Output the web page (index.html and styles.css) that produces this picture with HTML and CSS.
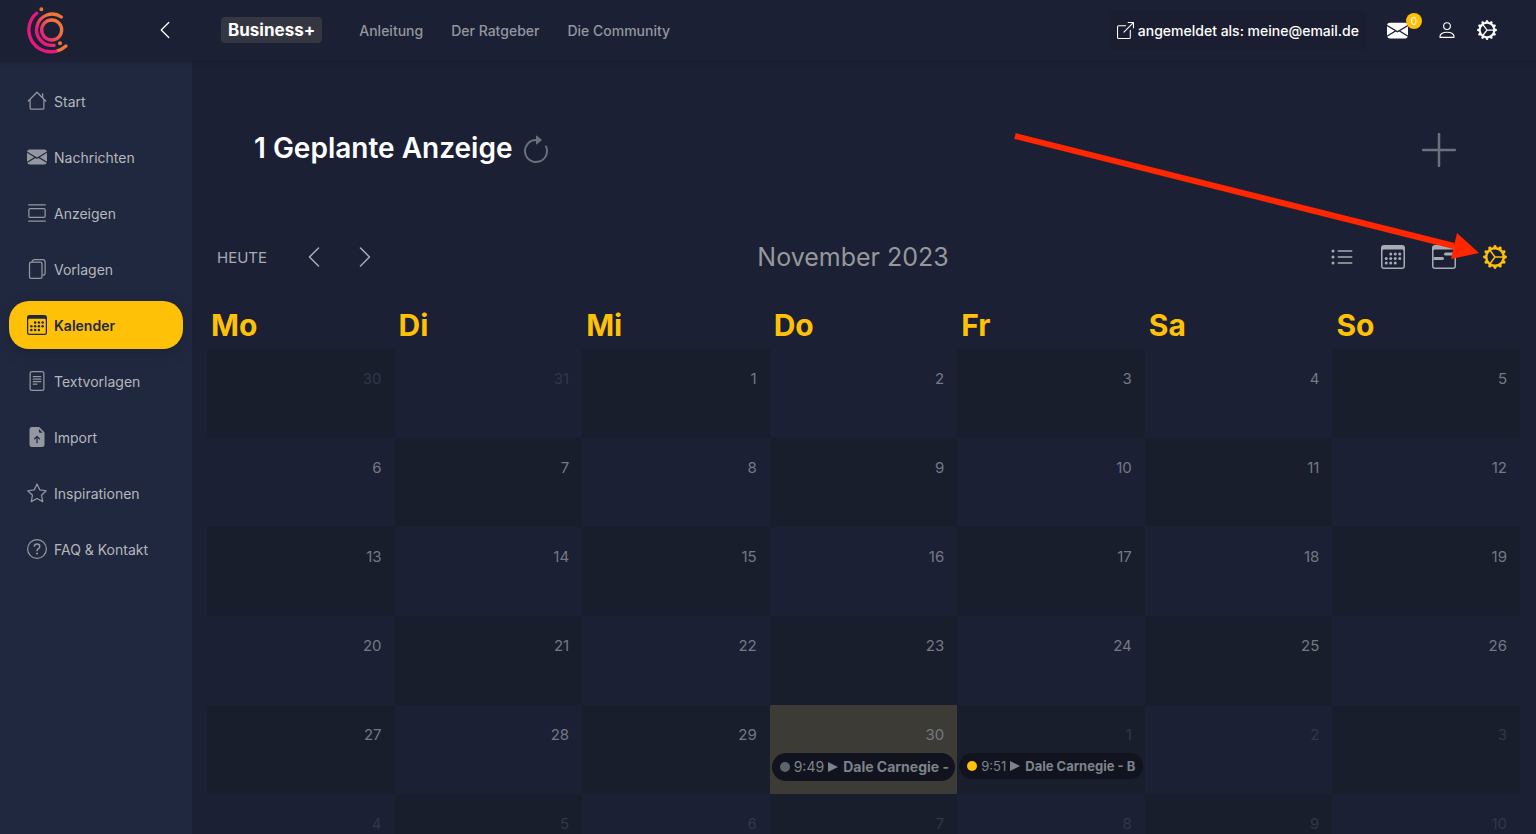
FILE: index.html
```html
<!DOCTYPE html>
<html lang="de">
<head>
    <meta charset="utf-8">
    <title>Kalender</title>
    <link rel="stylesheet" href="styles.css">
</head>
<body>
    <!-- icon set -->
    <svg class="sprite" aria-hidden="true">
        <symbol id="chevron-left" viewBox="0 0 16 16"><path d="M11 2 5 8l6 6" fill="none" stroke="currentColor" stroke-linecap="round" stroke-linejoin="round"/></symbol>
        <symbol id="chevron-right" viewBox="0 0 16 16"><path d="m5 2 6 6-6 6" fill="none" stroke="currentColor" stroke-linecap="round" stroke-linejoin="round"/></symbol>
        <symbol id="envelope" viewBox="0 0 16 16"><path d="M.05 3.555A2 2 0 0 1 2 2h12a2 2 0 0 1 1.95 1.555L8 8.414.05 3.555ZM0 4.697v7.104l5.803-3.558L0 4.697ZM6.761 8.83l-6.57 4.027A2 2 0 0 0 2 14h12a2 2 0 0 0 1.808-1.144l-6.57-4.027L8 9.586l-1.239-.757Zm3.436-.586L16 11.801V4.697l-5.803 3.546Z"/></symbol>
        <symbol id="person" viewBox="0 0 16 16"><g fill="none" stroke="currentColor"><circle cx="8" cy="4.500" r="3"/><path d="M1.700 14.500c-.2-3 2.500-4.500 6.300-4.500s6.500 1.500 6.300 4.500z" stroke-linejoin="round"/></g></symbol>
        <symbol id="gear" viewBox="0 0 16 16"><path d="M7.068.727c.243-.97 1.62-.97 1.864 0l.071.286a.96.96 0 0 0 1.622.434l.205-.211c.695-.719 1.888-.03 1.613.931l-.08.284a.96.96 0 0 0 1.187 1.187l.283-.081c.96-.275 1.65.918.931 1.613l-.211.205a.96.96 0 0 0 .434 1.622l.286.071c.97.243.97 1.62 0 1.864l-.286.071a.96.96 0 0 0-.434 1.622l.211.205c.719.695.03 1.888-.931 1.613l-.284-.08a.96.96 0 0 0-1.187 1.187l.081.283c.275.96-.918 1.65-1.613.931l-.205-.211a.96.96 0 0 0-1.622.434l-.071.286c-.243.97-1.62.97-1.864 0l-.071-.286a.96.96 0 0 0-1.622-.434l-.205.211c-.695.719-1.888.03-1.613-.931l.08-.284a.96.96 0 0 0-1.186-1.187l-.284.081c-.96.275-1.65-.918-.931-1.613l.211-.205a.96.96 0 0 0-.434-1.622l-.286-.071c-.97-.243-.97-1.62 0-1.864l.286-.071a.96.96 0 0 0 .434-1.622l-.211-.205c-.719-.695-.03-1.888.931-1.613l.284.08a.96.96 0 0 0 1.187-1.186l-.081-.284c-.275-.96.918-1.65 1.613-.931l.205.211a.96.96 0 0 0 1.622-.434l.071-.286zM12.973 8.5H8.25l-2.834 3.779A4.998 4.998 0 0 0 12.973 8.5zm0-1a4.998 4.998 0 0 0-7.557-3.779l2.834 3.78h4.723zM4.617 4.322A4.984 4.984 0 0 0 3.002 8c0 1.455.622 2.765 1.615 3.678L7.375 8 4.617 4.322z"/></symbol>
        <symbol id="link-out" viewBox="0 0 16 16"><path d="M8.636 3.5a.5.5 0 0 0-.5-.5H1.5A1.5 1.5 0 0 0 0 4.5v10A1.5 1.5 0 0 0 1.5 16h10a1.5 1.5 0 0 0 1.5-1.5V7.864a.5.5 0 0 0-1 0V14.500a.5.5 0 0 1-.5.5h-10a.5.5 0 0 1-.5-.5v-10a.5.5 0 0 1 .5-.5h6.636a.5.5 0 0 0 .5-.5z"/><path d="M16 .5a.5.5 0 0 0-.5-.5h-5a.5.5 0 0 0 0 1h3.793L6.146 9.146a.5.5 0 1 0 .708.708L15 1.707V5.500a.5.5 0 0 0 1 0v-5z"/></symbol>
        <symbol id="house" viewBox="0 0 16 16"><path d="M2.500 7v6.500a1 1 0 0 0 1 1h9a1 1 0 0 0 1-1V7M1 8l7-7 7 7M12.500 5V2" fill="none" stroke="currentColor" stroke-linecap="round" stroke-linejoin="round"/></symbol>
        <symbol id="ads" viewBox="0 0 16 16"><path d="M1 1.500h14M1 14.500h14" stroke="currentColor"/><rect x="1.500" y="4.500" width="13" height="7" rx="1" fill="none" stroke="currentColor"/></symbol>
        <symbol id="files" viewBox="0 0 16 16"><g fill="none" stroke="currentColor"><rect x="2" y="2.500" width="10" height="13" rx="1.500"/><path d="M4 2.500a2 2 0 0 1 2-2h6.500a2 2 0 0 1 2 2V11a2 2 0 0 1-2 2"/></g></symbol>
        <symbol id="calendar" viewBox="0 0 16 16"><path d="M14 0H2a2 2 0 0 0-2 2v12a2 2 0 0 0 2 2h12a2 2 0 0 0 2-2V2a2 2 0 0 0-2-2zM1 3.857C1 3.384 1.448 3 2 3h12c.552 0 1 .384 1 .857v10.286c0 .473-.448.857-1 .857H2c-.552 0-1-.384-1-.857V3.857z"/><circle cx="6.500" cy="6" r="1"/><circle cx="9.500" cy="6" r="1"/><circle cx="12.500" cy="6" r="1"/><circle cx="3.500" cy="9" r="1"/><circle cx="6.500" cy="9" r="1"/><circle cx="9.500" cy="9" r="1"/><circle cx="12.500" cy="9" r="1"/><circle cx="3.500" cy="12" r="1"/><circle cx="6.500" cy="12" r="1"/><circle cx="9.500" cy="12" r="1"/></symbol>
        <symbol id="range" viewBox="0 0 16 16"><path d="M14 0H2a2 2 0 0 0-2 2v12a2 2 0 0 0 2 2h12a2 2 0 0 0 2-2V2a2 2 0 0 0-2-2zM1 3.857C1 3.384 1.448 3 2 3h12c.552 0 1 .384 1 .857v10.286c0 .473-.448.857-1 .857H2c-.552 0-1-.384-1-.857V3.857z"/><path d="M7 10a1 1 0 0 0 0-2H1v2h6zm2-3h6V5H9a1 1 0 0 0 0 2z"/></symbol>
        <symbol id="list" viewBox="0 0 16 16"><path d="M5.500 4h9m-9 4h9m-9 4h9" stroke="currentColor" stroke-linecap="round"/><circle cx="2" cy="4" r="1"/><circle cx="2" cy="8" r="1"/><circle cx="2" cy="12" r="1"/></symbol>
        <symbol id="text" viewBox="0 0 16 16"><rect x="2.500" y=".5" width="11" height="15" rx="1.500" fill="none" stroke="currentColor"/><path d="M5 4.500h6m-6 2h6m-6 2h6m-6 2h3" stroke="currentColor" stroke-linecap="round"/></symbol>
        <symbol id="import" viewBox="0 0 16 16"><path d="M9.293 0H4a2 2 0 0 0-2 2v12a2 2 0 0 0 2 2h8a2 2 0 0 0 2-2V4.707A1 1 0 0 0 13.707 4L10 .293A1 1 0 0 0 9.293 0zM9.500 3.500v-2l3 3h-2a1 1 0 0 1-1-1zM6.354 9.854a.5.5 0 0 1-.708-.708l2-2a.5.5 0 0 1 .708 0l2 2a.5.5 0 0 1-.708.708L8.500 8.707V12.500a.5.5 0 0 1-1 0V8.707L6.354 9.854z"/></symbol>
        <symbol id="star" viewBox="0 0 16 16"><path d="m8 .8 2.200 4.700 5.200.7-3.800 3.600 1 5.100L8 12.400l-4.600 2.500 1-5.100L.6 6.200l5.200-.7z" fill="none" stroke="currentColor" stroke-linejoin="round"/></symbol>
        <symbol id="question" viewBox="0 0 16 16"><g fill="none" stroke="currentColor"><circle cx="8" cy="8" r="7.500"/><path d="M5.800 6.100C5.900 4.700 6.800 4 8 4c1.300 0 2.200.8 2.200 1.900 0 1-.5 1.500-1.300 2C8.200 8.400 8 8.700 8 9.800" stroke-width="1.200"/></g><circle cx="8" cy="11.500" r=".8"/></symbol>
        <symbol id="reload" viewBox="0 0 16 16"><path d="M8 3a5 5 0 1 0 4.546 2.914.5.5 0 0 1 .908-.417A6 6 0 1 1 8 2v1z"/><path d="M8 4.466V.534a.25.25 0 0 1 .41-.192l2.360 1.966c.12.1.12.284 0 .384L8.410 4.658A.25.25 0 0 1 8 4.466z"/></symbol>
        <symbol id="plus" viewBox="0 0 34 34"><path d="M17 1v32M1 17h32" stroke="currentColor" stroke-width="2.500" stroke-linecap="round"/></symbol>
    </svg>

    <header class="topbar">
        <a class="logo" href="#" aria-label="Startseite">
            <svg viewBox="79 15 126 144" fill="none" stroke="url(#brand)" stroke-width="10" stroke-linecap="round">
                <defs>
                    <linearGradient id="brand" gradientUnits="userSpaceOnUse" x1="120" y1="105" x2="165" y2="72">
                        <stop offset="0" stop-color="#e6197f"/>
                        <stop offset="1" stop-color="#f3743a"/>
                    </linearGradient>
                </defs>
                <circle cx="153" cy="87" r="30"/>
                <path d="M182 48A47 47 0 1 0 160 133"/>
                <path d="M108 37A65 65 0 0 0 150 152" stroke="#e6197f"/>
                <path d="M168 150A65 65 0 0 0 196 135" stroke="#f3743a"/>
                <path d="M140 151A65 65 0 0 0 166 151" stroke="#e6197f"/>
                <path d="M122 25h.1M178 127h.1" stroke="#f3743a" stroke-width="12"/>
            </svg>
        </a>
        <button class="collapse" aria-label="Menü einklappen"><svg><use href="#chevron-left"/></svg></button>
        <span class="plan">Business+</span>
        <nav class="topnav">
            <a href="#">Anleitung</a>
            <a href="#">Der Ratgeber</a>
            <a href="#">Die Community</a>
        </nav>
        <a class="account" href="#"><svg><use href="#link-out"/></svg>angemeldet als: meine@email.de</a>
        <div class="actions">
            <button class="mail" aria-label="Nachrichten"><svg><use href="#envelope"/></svg><span class="badge">0</span></button>
            <button class="profile" aria-label="Profil"><svg><use href="#person"/></svg></button>
            <button aria-label="Einstellungen"><svg><use href="#gear"/></svg></button>
        </div>
    </header>

    <div class="layout">
        <nav class="sidebar">
            <a href="#"><svg><use href="#house"/></svg>Start</a>
            <a href="#"><svg><use href="#envelope"/></svg>Nachrichten</a>
            <a href="#"><svg><use href="#ads"/></svg>Anzeigen</a>
            <a href="#"><svg><use href="#files"/></svg>Vorlagen</a>
            <a class="active" href="#"><svg><use href="#calendar"/></svg>Kalender</a>
            <a href="#"><svg><use href="#text"/></svg>Textvorlagen</a>
            <a href="#"><svg><use href="#import"/></svg>Import</a>
            <a href="#"><svg><use href="#star"/></svg>Inspirationen</a>
            <a href="#"><svg><use href="#question"/></svg>FAQ &amp; Kontakt</a>
        </nav>

        <main>
            <div class="page-head">
                <h1>1 Geplante Anzeige</h1>
                <button class="reload" aria-label="Neu laden"><svg><use href="#reload"/></svg></button>
                <button class="add" aria-label="Neue Anzeige"><svg><use href="#plus"/></svg></button>
            </div>

            <div class="toolbar">
                <div class="group">
                    <button class="today-btn">HEUTE</button>
                    <button aria-label="Zurück"><svg><use href="#chevron-left"/></svg></button>
                    <button aria-label="Weiter"><svg><use href="#chevron-right"/></svg></button>
                </div>
                <h2>November 2023</h2>
                <div class="group">
                    <button aria-label="Liste"><svg><use href="#list"/></svg></button>
                    <button aria-label="Monat"><svg><use href="#calendar"/></svg></button>
                    <button aria-label="Woche"><svg><use href="#range"/></svg></button>
                    <button class="settings" aria-label="Kalender-Einstellungen"><svg><use href="#gear"/></svg></button>
                </div>
                <svg class="pointer" viewBox="0 0 466 128" aria-hidden="true">
                    <path d="M1 4 440 114" stroke="#ff2600" stroke-width="6"/>
                    <path d="m465 121-28 6 6-26z" fill="#ff2600"/>
                </svg>
            </div>

            <table class="calendar">
                <thead>
                    <tr><th>Mo</th><th>Di</th><th>Mi</th><th>Do</th><th>Fr</th><th>Sa</th><th>So</th></tr>
                </thead>
                <tbody>
                    <tr><td class="other">30</td><td class="other">31</td><td>1</td><td>2</td><td>3</td><td>4</td><td>5</td></tr>
                    <tr><td>6</td><td>7</td><td>8</td><td>9</td><td>10</td><td>11</td><td>12</td></tr>
                    <tr><td>13</td><td>14</td><td>15</td><td>16</td><td>17</td><td>18</td><td>19</td></tr>
                    <tr><td>20</td><td>21</td><td>22</td><td>23</td><td>24</td><td>25</td><td>26</td></tr>
                    <tr>
                        <td>27</td><td>28</td><td>29</td>
                        <td class="today">30<a class="event large" href="#"><i class="dot"></i>9:49 <i class="play"></i><b>Dale Carnegie -</b></a></td>
                        <td class="other">1<a class="event" href="#"><i class="dot planned"></i>9:51 <i class="play"></i><b>Dale Carnegie - B</b></a></td>
                        <td class="other">2</td><td class="other">3</td>
                    </tr>
                    <tr><td class="other">4</td><td class="other">5</td><td class="other">6</td><td class="other">7</td><td class="other">8</td><td class="other">9</td><td class="other">10</td></tr>
                </tbody>
            </table>
        </main>
    </div>
</body>
</html>
```
FILE: styles.css
```css
* {
    box-sizing: border-box;
}

body {
    margin: 0;
    height: 100vh;
    display: flex;
    flex-direction: column;
    overflow: hidden;
    background-color: #1b2035;
    color: #a9abb2;
    font-family: Inter, 'Liberation Sans', sans-serif;
    font-size: 14px;
}

a {
    color: inherit;
    text-decoration: none;
}

button {
    display: flex;
    align-items: center;
    justify-content: center;
    padding: 0;
    border: none;
    background: none;
    color: inherit;
    font: inherit;
    cursor: pointer;
}

svg {
    display: block;
    flex: none;
    width: 20px;
    height: 20px;
    fill: currentColor;
}

.sprite {
    position: absolute;
    width: 0;
    height: 0;
}

/* top bar */
.topbar {
    position: relative;
    flex: none;
    display: flex;
    align-items: center;
    height: 60px;
    padding: 0 39px 0 27px;
    box-shadow: 0 1px 4px #171b2b;
}

.logo svg {
    width: 42px;
    height: 48px;
    fill: none;
}

.collapse {
    margin-left: 86px;
    color: #fff;
}

.plan {
    margin-left: 46px;
    padding: 0 7px;
    border-radius: 4px;
    background-color: #343741;
    color: #fff;
    font-size: 17px;
    font-weight: 700;
    line-height: 26px;
}

.topnav {
    display: flex;
    gap: 28px;
    margin-left: 37px;
    font-weight: 500;
    color: #94969d;
}

.account {
    display: flex;
    align-items: center;
    gap: 4px;
    height: 40px;
    margin-left: auto;
    padding: 0 8px;
    border-radius: 4px;
    background-color: #1a1e30;
    color: #fff;
    font-weight: 500;
}

.account svg {
    width: 17px;
    height: 17px;
}

.actions {
    display: flex;
    align-items: center;
    gap: 21px;
    margin-left: 20px;
    color: #fff;
}

.mail {
    position: relative;
    margin-right: 9px;
}

.mail svg {
    width: 21px;
    height: 21px;
}

.profile svg {
    width: 18px;
    height: 18px;
}

.badge {
    position: absolute;
    top: -7px;
    right: -14px;
    width: 16px;
    border-radius: 8px;
    background-color: #ffc107;
    font-size: 10px;
    line-height: 16px;
}

/* side navigation */
.layout {
    flex: 1;
    display: flex;
    min-height: 0;
}

.sidebar {
    flex: none;
    display: flex;
    flex-direction: column;
    gap: 8px;
    width: 192px;
    padding: 17px 9px;
    background-color: #20283f;
    color: #b5b7bc;
}

.sidebar a {
    display: flex;
    align-items: center;
    gap: 7px;
    height: 48px;
    padding-left: 18px;
    border-radius: 20px;
}

.sidebar svg {
    color: #9496a0;
}

.sidebar .active {
    background-color: #ffc107;
    color: #20283f;
    font-weight: 600;
    box-shadow: 0 4px 12px #1b2338;
}

.sidebar .active svg {
    color: inherit;
}

main {
    flex: 1;
    min-width: 0;
    padding: 0 16px 0 15px;
    overflow: hidden;
}

.page-head {
    display: flex;
    align-items: flex-end;
    height: 46px;
    margin: 61px 64px 66px 47px;
}

h1 {
    margin: 0;
    color: #fff;
    font-size: 28px;
    font-weight: 600;
    line-height: 38px;
}

.reload {
    margin-left: 8px;
    color: #6c7078;
}

.reload svg {
    width: 32px;
    height: 32px;
}

.add {
    margin-left: auto;
    color: #6c727d;
}

.add svg {
    width: 34px;
    height: 34px;
}

/* calendar toolbar */
.toolbar {
    position: relative;
    display: flex;
    align-items: center;
    justify-content: space-between;
    height: 48px;
}

.group {
    display: flex;
}

.group button {
    width: 51px;
    height: 48px;
}

.group .today-btn {
    width: 70px;
    margin-right: 11px;
    font-size: 15px;
}

.group svg {
    width: 24px;
    height: 24px;
}

.group .settings {
    color: #ffc107;
}

h2 {
    margin: 0;
    color: #96989b;
    font-size: 25px;
    font-weight: 400;
}

.toolbar .pointer {
    position: absolute;
    right: 40px;
    bottom: 21px;
    width: 466px;
    height: 128px;
    pointer-events: none;
}

/* month grid */
.calendar {
    width: 100%;
    margin-top: 19px;
    border-collapse: collapse;
    table-layout: fixed;
}

th {
    height: 49px;
    padding: 0 4px;
    color: #ffc107;
    font-size: 30px;
    font-weight: 700;
    line-height: 36px;
    text-align: left;
}

td {
    height: 89px;
    padding: 20px 13px 0 0;
    color: #747983;
    font-size: 15px;
    line-height: 20px;
    text-align: right;
    vertical-align: top;
}

tbody tr:nth-child(odd) td:nth-child(odd),
tbody tr:nth-child(even) td:nth-child(even) {
    background-color: #191e2d;
}

td.other {
    color: #31374a;
}

tbody tr td.today {
    background-color: #3d3b36;
    color: #747983;
}

.event {
    display: flex;
    align-items: center;
    height: 26px;
    margin: 8px -11px 0 2px;
    padding: 0 3px 0 8px;
    border-radius: 14px;
    background-color: #11141f;
    color: #7e828b;
    font-size: 13px;
    white-space: nowrap;
    overflow: hidden;
}

.event.large {
    height: 28px;
    font-size: 14px;
}

.dot {
    flex: none;
    width: 10px;
    height: 10px;
    margin-right: 4px;
    border-radius: 50%;
    background-color: #5c646b;
}

.dot.planned {
    background-color: #ffc107;
}

.play {
    flex: none;
    margin: 0 5px 0 4px;
    border: solid transparent;
    border-width: 5px 0 5px 10px;
    border-left-color: currentColor;
}
```
